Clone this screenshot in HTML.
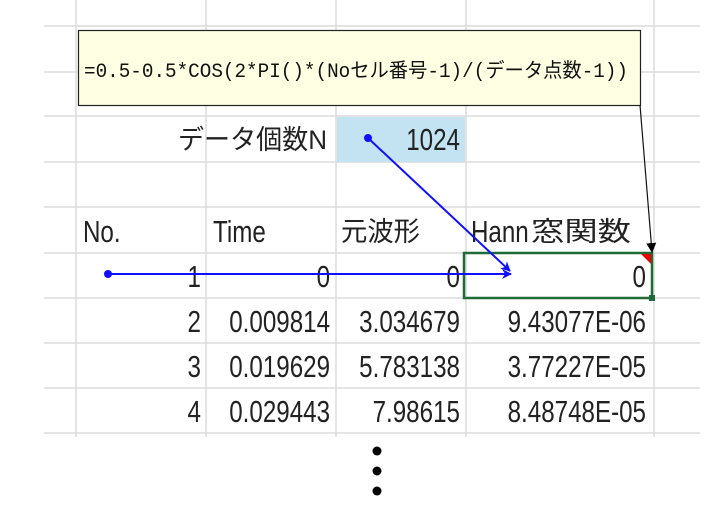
<!DOCTYPE html>
<html><head><meta charset="utf-8"><style>
html,body{margin:0;padding:0;background:#fff;}
svg{display:block;}
.t{font-family:"Liberation Sans","Noto Sans CJK JP",sans-serif;font-size:31px;fill:#222;}
.j{font-family:"Liberation Sans","Noto Sans CJK JP",sans-serif;font-size:27px;fill:#222;}
.m{font-family:"Liberation Mono","Noto Sans CJK JP",monospace;font-size:20px;fill:#111;}
</style></head><body>
<svg width="722" height="529" viewBox="0 0 722 529" xmlns="http://www.w3.org/2000/svg">
<defs>
<marker id="ab" markerWidth="10" markerHeight="10" refX="9" refY="5" orient="auto" markerUnits="userSpaceOnUse"><path d="M0,0 L10,5 L0,10 L3,5 Z" fill="#1010ff"/></marker>
<marker id="ak" markerWidth="10" markerHeight="12" refX="9" refY="5" orient="auto" markerUnits="userSpaceOnUse"><path d="M0,0 L10,5 L0,10 Z" fill="#000"/></marker>
</defs>
<g stroke="#dcdcdc" stroke-width="1.5">
<line x1="76" y1="0" x2="76" y2="437"/>
<line x1="206" y1="0" x2="206" y2="437"/>
<line x1="336" y1="0" x2="336" y2="437"/>
<line x1="466" y1="0" x2="466" y2="437"/>
<line x1="654" y1="0" x2="654" y2="437"/>
<line x1="44" y1="26" x2="700" y2="26"/>
<line x1="44" y1="72" x2="700" y2="72"/>
<line x1="44" y1="116" x2="700" y2="116"/>
<line x1="44" y1="162" x2="700" y2="162"/>
<line x1="44" y1="207" x2="700" y2="207"/>
<line x1="44" y1="253" x2="700" y2="253"/>
<line x1="44" y1="298" x2="700" y2="298"/>
<line x1="44" y1="343" x2="700" y2="343"/>
<line x1="44" y1="388" x2="700" y2="388"/>
<line x1="44" y1="433" x2="700" y2="433"/>
</g>
<rect x="337" y="117" width="128" height="45" fill="#c3e3f3"/>
<rect x="78.5" y="30.5" width="562" height="75" fill="#ffffe3" stroke="#222" stroke-width="1.2"/>
<text class="m" x="84" y="77" textLength="544" lengthAdjust="spacingAndGlyphs">=0.5-0.5*COS(2*PI()*(Noセル番号-1)/(データ点数-1))</text>
<text class="j" x="178" y="149" textLength="149" lengthAdjust="spacingAndGlyphs">データ個数N</text>
<text class="j" x="341" y="241" textLength="79" lengthAdjust="spacingAndGlyphs">元波形</text>
<text class="j" x="531" y="241" textLength="100" lengthAdjust="spacingAndGlyphs">窓関数</text>
<g transform="scale(0.78 1)">
<text class="t" x="589.7" y="150" text-anchor="end">1024</text>
<text class="t" x="106.4" y="242">No.</text>
<text class="t" x="273.1" y="242">Time</text>
<text class="t" x="603.8" y="242">Hann</text>
<g class="t" text-anchor="end">
<text x="257.7" y="287">1</text><text x="423.1" y="287">0</text><text x="589.7" y="287">0</text><text x="828.2" y="287">0</text>
<text x="257.7" y="332">2</text><text x="423.1" y="332">0.009814</text><text x="589.7" y="332">3.034679</text><text x="828.2" y="332">9.43077E-06</text>
<text x="257.7" y="377">3</text><text x="423.1" y="377">0.019629</text><text x="589.7" y="377">5.783138</text><text x="828.2" y="377">3.77227E-05</text>
<text x="257.7" y="422">4</text><text x="423.1" y="422">0.029443</text><text x="589.7" y="422">7.98615</text><text x="828.2" y="422">8.48748E-05</text>
</g>
</g>
<rect x="464" y="253" width="188" height="45" fill="none" stroke="#1e6b35" stroke-width="2.5"/>
<rect x="649" y="295" width="6" height="6" fill="#1e6b35"/>
<path d="M641,254 L651,254 L651,264 Z" fill="#e00"/>
<line x1="640" y1="105" x2="652" y2="252" stroke="#111" stroke-width="1.2" marker-end="url(#ak)"/>
<line x1="368" y1="138" x2="510" y2="271" stroke="#1010ff" stroke-width="2" marker-end="url(#ab)"/>
<circle cx="368" cy="138" r="4" fill="#1010ff"/>
<line x1="108" y1="274" x2="511" y2="274" stroke="#1010ff" stroke-width="2" marker-end="url(#ab)"/>
<circle cx="108" cy="274" r="4" fill="#1010ff"/>
<circle cx="377" cy="451" r="4.5" fill="#000"/>
<circle cx="377" cy="471" r="4.5" fill="#000"/>
<circle cx="377" cy="491" r="4.5" fill="#000"/>
</svg>
</body></html>
